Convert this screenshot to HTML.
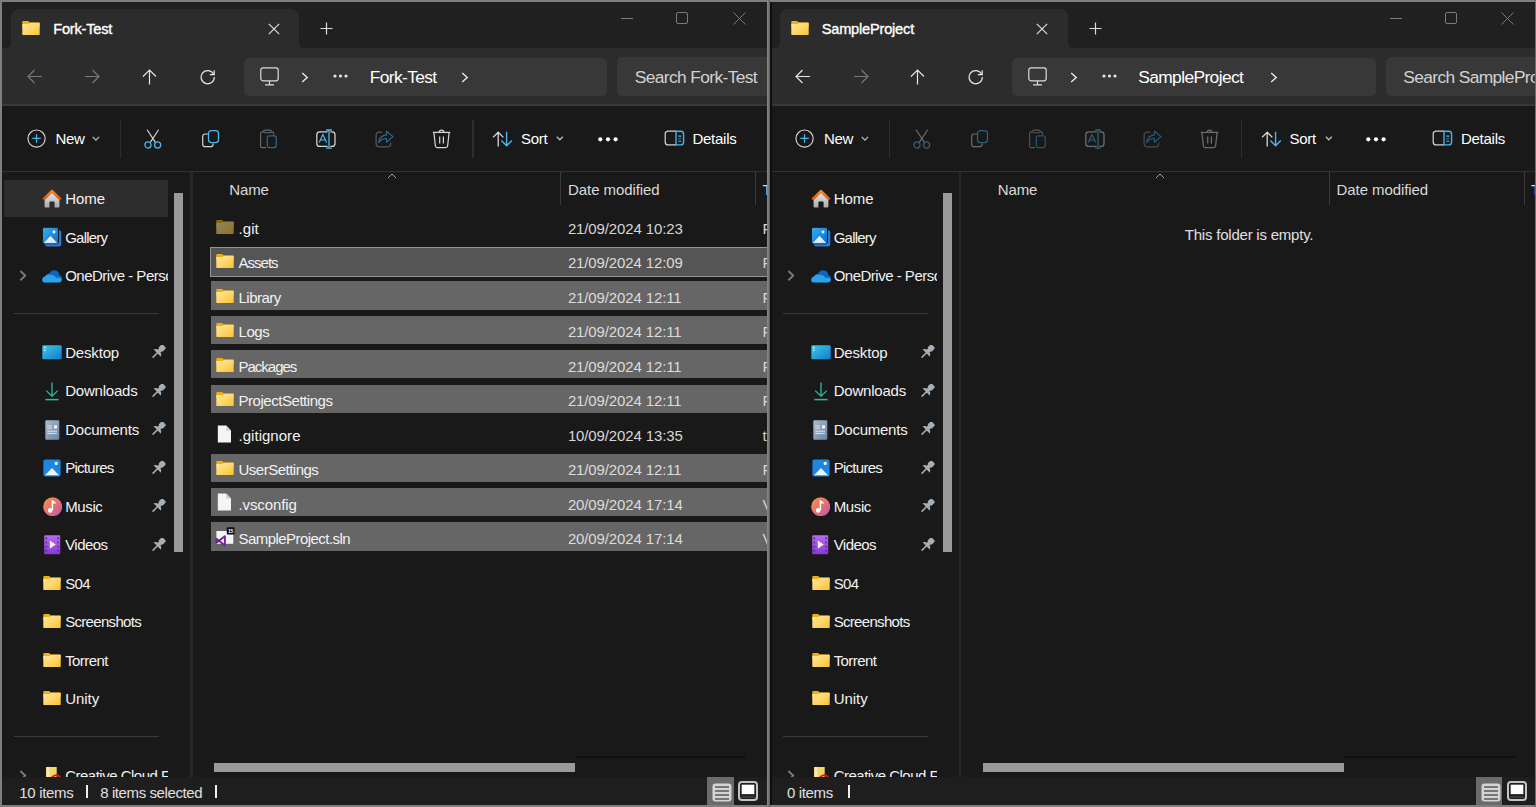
<!DOCTYPE html><html><head><meta charset="utf-8"><style>html,body{margin:0;padding:0;width:1536px;height:807px;overflow:hidden;background:#7f7f7f;font-family:"Liberation Sans",sans-serif}</style></head><body>
<svg width="0" height="0" style="position:absolute"><defs><linearGradient id="fg" x1="0" y1="0" x2="1" y2="1"><stop offset="0" stop-color="#ffe69a"/><stop offset="0.5" stop-color="#fed86c"/><stop offset="1" stop-color="#f8c232"/></linearGradient></defs></svg>
<div style="position:absolute;left:2px;top:2px;width:765px;height:803px;overflow:hidden;background:#191919">
<div style="position:absolute;left:-2px;top:-2px;width:1536px;height:807px">
<div style="position:absolute;left:0px;top:0px;width:800px;height:48px;background:#202020;"></div>
<div style="position:absolute;left:11px;top:9px;width:288.3px;height:39px;background:#2c2c2c;border-radius:8px 8px 0 0"></div>
<svg style="position:absolute;left:5px;top:42px;" width="6" height="6" viewBox="0 0 6 6"><path d="M0 6 Q6 6 6 0 L6 6 Z" fill="#2c2c2c"/></svg>
<svg style="position:absolute;left:299.3px;top:42px;" width="6" height="6" viewBox="0 0 6 6"><path d="M6 6 Q0 6 0 0 L0 6 Z" fill="#2c2c2c"/></svg>
<svg style="position:absolute;left:22.3px;top:21.4px;" width="18" height="14" viewBox="0 0 18 14"><path d="M0.3 1 Q0.3 0.1 1.2 0.1 L5.8 0.1 Q6.4 0.1 6.8 0.6 L7.6 1.5 L17.2 1.5 Q17.7 1.5 17.7 2 V6 H0.3 Z" fill="#eeb00e"/><path d="M0.3 2.9 H6.6 L7.9 1.7 H17.2 Q17.7 1.7 17.7 2.2 V13.3 Q17.7 13.9 17.1 13.9 H0.9 Q0.3 13.9 0.3 13.3 Z" fill="url(#fg)"/></svg>
<div style="position:absolute;left:53.2px;top:22.44px;font-size:14.6px;line-height:14.6px;height:14.6px;color:#ffffff;font-weight:400;white-space:nowrap;letter-spacing:-0.2px;-webkit-text-stroke:0.35px #fff">Fork-Test</div>
<svg style="position:absolute;left:267.8px;top:22.6px;" width="12" height="12" viewBox="0 0 12 12"><path d="M0.8 0.8 L11.2 11.2 M11.2 0.8 L0.8 11.2" stroke="#e6e6e6" stroke-width="1.1"/></svg>
<svg style="position:absolute;left:320.4px;top:22.4px;" width="13" height="13" viewBox="0 0 13 13"><path d="M6.5 0.5 V12.5 M0.5 6.5 H12.5" stroke="#dcdcdc" stroke-width="1.2"/></svg>
<div style="position:absolute;left:621px;top:17.5px;width:12px;height:1px;background:#7b7b7b;"></div>
<div style="position:absolute;left:676.1px;top:12px;width:12.2px;height:11.8px;background:transparent;box-sizing:border-box;border:1px solid #7b7b7b;border-radius:2px"></div>
<svg style="position:absolute;left:732.6px;top:11.8px;" width="13" height="13" viewBox="0 0 13 13"><path d="M0.5 0.5 L12.5 12.5 M12.5 0.5 L0.5 12.5" stroke="#7b7b7b" stroke-width="1"/></svg>
<div style="position:absolute;left:0px;top:48px;width:800px;height:56.5px;background:#2c2c2c;"></div>
<div style="position:absolute;left:0px;top:104.3px;width:800px;height:1.3px;background:#393939;"></div>
<svg style="position:absolute;left:26.6px;top:69.2px;" width="16" height="15" viewBox="0 0 16 15"><path d="M15 7.5 H1 M7.5 1 L1 7.5 L7.5 14" stroke="#7a7a7a" stroke-width="1.15" fill="none"/></svg>
<svg style="position:absolute;left:84.4px;top:69.2px;" width="16" height="15" viewBox="0 0 16 15"><path d="M1 7.5 H15 M8.5 1 L15 7.5 L8.5 14" stroke="#7a7a7a" stroke-width="1.15" fill="none"/></svg>
<svg style="position:absolute;left:141.6px;top:69.4px;" width="15" height="15.5" viewBox="0 0 15 15.5"><path d="M7.5 15.5 V1 M1 7.5 L7.5 1 L14 7.5" stroke="#e6e6e6" stroke-width="1.2" fill="none"/></svg>
<svg style="position:absolute;left:199.6px;top:68.8px;" width="16" height="16" viewBox="0 0 16 16"><path d="M13.6 5.2 A6.6 6.6 0 1 0 14.3 8" stroke="#e6e6e6" stroke-width="1.2" fill="none"/><path d="M14.2 1.2 V5.6 H9.8" stroke="#e6e6e6" stroke-width="1.2" fill="none"/></svg>
<div style="position:absolute;left:243.6px;top:57.6px;width:363.6px;height:38.4px;background:#383838;border-radius:5px"></div>
<svg style="position:absolute;left:259.5px;top:66.8px;" width="19" height="19" viewBox="0 0 19 19"><rect x="0.8" y="0.8" width="17.4" height="13" rx="2.2" stroke="#dcdcdc" stroke-width="1.2" fill="none"/><path d="M9.5 14 V17.6 M5 17.8 H14" stroke="#dcdcdc" stroke-width="1.2"/></svg>
<svg style="position:absolute;left:301.2px;top:72.4px;" width="8" height="11" viewBox="0 0 8 11"><path d="M1.2 1 L6.2 5.5 L1.2 10" stroke="#e6e6e6" stroke-width="1.45" fill="none"/></svg>
<svg style="position:absolute;left:333px;top:74px;" width="15" height="4" viewBox="0 0 15 4"><circle cx="2" cy="2" r="1.6" fill="#e6e6e6"/><circle cx="7.5" cy="2" r="1.6" fill="#e6e6e6"/><circle cx="13" cy="2" r="1.6" fill="#e6e6e6"/></svg>
<div style="position:absolute;left:369.7px;top:69.30px;font-size:17.4px;line-height:17.4px;height:17.4px;color:#ffffff;font-weight:400;white-space:nowrap;letter-spacing:-0.62px">Fork-Test</div>
<svg style="position:absolute;left:460.5px;top:72.4px;" width="8" height="11" viewBox="0 0 8 11"><path d="M1.2 1 L6.2 5.5 L1.2 10" stroke="#e6e6e6" stroke-width="1.45" fill="none"/></svg>
<div style="position:absolute;left:617.2px;top:57.2px;width:200px;height:38.4px;background:#383838;border-radius:5px"></div>
<div style="position:absolute;left:634.7px;top:69.35px;font-size:17.4px;line-height:17.4px;height:17.4px;color:#d2d2d2;font-weight:400;white-space:nowrap;letter-spacing:-0.63px">Search Fork-Test</div>
<div style="position:absolute;left:0px;top:105.6px;width:800px;height:65.6px;background:#191919;"></div>
<div style="position:absolute;left:0px;top:171px;width:800px;height:1.2px;background:#303030;"></div>
<svg style="position:absolute;left:26.5px;top:128.5px;" width="20" height="20" viewBox="0 0 20 20"><circle cx="9.55" cy="9.55" r="8.6" stroke="#d8d8d8" stroke-width="1.15" fill="none"/><path d="M9.55 5.2 V13.7 M5.3 9.4 H13.8" stroke="#4cb6ee" stroke-width="1.25"/></svg>
<div style="position:absolute;left:55.5px;top:131.10px;font-size:15px;line-height:15px;height:15px;color:#ffffff;font-weight:400;white-space:nowrap;letter-spacing:-0.3px">New</div>
<svg style="position:absolute;left:92.3px;top:136.2px;" width="8" height="6" viewBox="0 0 8 6"><path d="M0.7 0.9 L3.9 4.1 L7.1 0.9" stroke="#c0c0c0" stroke-width="1.2" fill="none"/></svg>
<div style="position:absolute;left:120.2px;top:119.5px;width:1.2px;height:38px;background:#2e2e2e;"></div>
<svg style="position:absolute;left:144px;top:128.5px;" width="18" height="20" viewBox="0 0 18 20"><path d="M3.1 0.7 L11.4 13.4 M14.6 0.7 L6.3 13.4" stroke="#d4d4d4" stroke-width="1.15" fill="none"/><circle cx="4" cy="16" r="3.05" stroke="#4cb6ee" stroke-width="1.3" fill="none"/><circle cx="13.6" cy="16" r="3.05" stroke="#4cb6ee" stroke-width="1.3" fill="none"/></svg>
<svg style="position:absolute;left:201px;top:129px;" width="20" height="19" viewBox="0 0 20 19"><path d="M6.9 5 H4.2 Q1.7 5 1.7 7.5 V15.2 Q1.7 17.7 4.2 17.7 H9.6 Q12.1 17.7 12.1 15.2 V14.5" stroke="#d4d4d4" stroke-width="1.2" fill="none"/><rect x="7.5" y="1.7" width="10" height="11.9" rx="2.8" stroke="#4cb6ee" stroke-width="1.3" fill="none"/></svg>
<svg style="position:absolute;left:259px;top:128.6px;" width="19" height="20" viewBox="0 0 19 20"><path d="M4 2.8 H3.4 Q1.6 2.8 1.6 4.6 V17 Q1.6 18.6 3.2 18.6 H7" stroke="#6a6a6a" stroke-width="1.15" fill="none"/><path d="M12.6 2.8 H13 Q14.6 2.8 14.6 4.6 V5.8" stroke="#6a6a6a" stroke-width="1.15" fill="none"/><path d="M4.6 2.4 Q4.6 1.1 6.1 1.1 H10.8 Q12.3 1.1 12.3 2.4 Q12.3 3.7 10.8 3.7 H6.1 Q4.6 3.7 4.6 2.4 Z" stroke="#6a6a6a" stroke-width="1.1" fill="none"/><rect x="8.3" y="6.9" width="8.9" height="11.7" rx="2" stroke="#2c6a8e" stroke-width="1.2" fill="none"/></svg>
<svg style="position:absolute;left:315px;top:128.5px;" width="22" height="20" viewBox="0 0 22 20"><path d="M12.6 2.8 H4.8 Q1.8 2.8 1.8 5.8 V14.4 Q1.8 17.4 4.8 17.4 H12.6 M15.4 2.8 H17 Q20 2.8 20 5.8 V14.4 Q20 17.4 17 17.4 H15.4" stroke="#d4d4d4" stroke-width="1.25" fill="none"/><path d="M14 1 V19.2 M11.1 1 H16.9 M11.1 19.2 H16.9" stroke="#4cb6ee" stroke-width="1.3" fill="none"/><path d="M4.2 13.6 L7.9 5.6 L11.6 13.6 M5.5 11 H10.3" stroke="#4cb6ee" stroke-width="1.2" fill="none"/></svg>
<svg style="position:absolute;left:374.5px;top:129.5px;" width="19" height="18" viewBox="0 0 19 18"><path d="M7.2 2.1 H4.5 Q1.1 2.1 1.1 5.5 V13.4 Q1.1 16.8 4.5 16.8 H12.3 Q15.7 16.8 15.7 13.4 V12.6" stroke="#5a5a5a" stroke-width="1.2" fill="none"/><path d="M3.6 12.6 Q4.6 5.6 11.5 4.8 V1.2 L18 6.6 L11.5 12.2 V8.5 Q6.6 8.4 3.6 12.6 Z" stroke="#2e6a8e" stroke-width="1.2" fill="none" stroke-linejoin="round"/></svg>
<svg style="position:absolute;left:431.5px;top:128.5px;" width="19" height="20" viewBox="0 0 19 20"><path d="M0.8 3.4 H18.2" stroke="#d4d4d4" stroke-width="1.3"/><path d="M7.2 3.2 Q7.2 1.1 9.5 1.1 Q11.8 1.1 11.8 3.2" stroke="#d4d4d4" stroke-width="1.2" fill="none"/><path d="M1.9 3.8 L3.4 17 Q3.6 18.6 5.3 18.6 H13.7 Q15.4 18.6 15.6 17 L17.1 3.8" stroke="#d4d4d4" stroke-width="1.25" fill="none"/><path d="M7.7 7.6 V14.6 M11.4 7.6 V14.6" stroke="#d4d4d4" stroke-width="1.25"/></svg>
<div style="position:absolute;left:472.4px;top:119.5px;width:1.2px;height:38px;background:#2e2e2e;"></div>
<svg style="position:absolute;left:492.3px;top:130.5px;" width="21" height="16" viewBox="0 0 21 16"><path d="M6.2 15.4 V1.2 M1 6.4 L6.2 1.2 L11.4 6.4" stroke="#d8d8d8" stroke-width="1.3" fill="none"/><path d="M14.6 0.8 V14.8 M9.4 9.6 L14.6 14.8 L19.8 9.6" stroke="#4cb6ee" stroke-width="1.4" fill="none"/></svg>
<div style="position:absolute;left:521.0px;top:131.10px;font-size:15px;line-height:15px;height:15px;color:#ffffff;font-weight:400;white-space:nowrap;letter-spacing:-0.3px">Sort</div>
<svg style="position:absolute;left:556px;top:136.4px;" width="8" height="6" viewBox="0 0 8 6"><path d="M0.8 0.8 L3.8 3.8 L6.8 0.8" stroke="#c0c0c0" stroke-width="1.25" fill="none"/></svg>
<svg style="position:absolute;left:597.5px;top:136.5px;" width="20" height="5" viewBox="0 0 20 5"><circle cx="2.3" cy="2.3" r="2.1" fill="#fff"/><circle cx="10" cy="2.3" r="2.1" fill="#fff"/><circle cx="17.6" cy="2.3" r="2.1" fill="#fff"/></svg>
<svg style="position:absolute;left:663.6px;top:130.4px;" width="21" height="16" viewBox="0 0 21 16"><path d="M12 1.2 H4.2 Q1.2 1.2 1.2 4.2 V11.9 Q1.2 14.9 4.2 14.9 H12" stroke="#d0d0d0" stroke-width="1.25" fill="none"/><path d="M12 1.2 H16.6 Q19.6 1.2 19.6 4.2 V11.9 Q19.6 14.9 16.6 14.9 H12 Z" stroke="#4cb6ee" stroke-width="1.35" fill="none"/><path d="M14.3 6.1 H17.4 M14.3 11.2 H17.4" stroke="#4cb6ee" stroke-width="1.1"/><path d="M14.3 8.7 H17.4" stroke="#3a7fa8" stroke-width="1.1"/></svg>
<div style="position:absolute;left:692.4px;top:131.10px;font-size:15px;line-height:15px;height:15px;color:#ffffff;font-weight:400;white-space:nowrap;letter-spacing:-0.25px">Details</div>
<div style="position:absolute;left:190.3px;top:172.2px;width:2.4px;height:605px;background:#272727;"></div>
<div style="position:absolute;left:4px;top:179.8px;width:164px;height:37.6px;background:#2d2d2d;"></div>
<div style="position:absolute;left:174.3px;top:193px;width:8.8px;height:358.6px;background:#9a9a9a;"></div>
<div style="position:absolute;left:14px;top:313.2px;width:145px;height:1.2px;background:#3a3a3a;"></div>
<div style="position:absolute;left:14px;top:736.2px;width:145px;height:1.2px;background:#3a3a3a;"></div>
<div style="position:absolute;left:0;top:0;width:168px;height:807px;overflow:hidden"><div style="position:absolute;left:65.2px;top:191.30px;font-size:15px;line-height:15px;height:15px;color:#f2f2f2;font-weight:400;white-space:nowrap;letter-spacing:-0.03px">Home</div></div>
<svg style="position:absolute;left:42px;top:189.2px;" width="20" height="20" viewBox="0 0 20 20"><defs><linearGradient id="hg" x1="0" y1="0" x2="0" y2="1"><stop offset="0" stop-color="#e8e8e8"/><stop offset="1" stop-color="#a9a9a9"/></linearGradient><linearGradient id="rg" x1="0" y1="0" x2="0" y2="1"><stop offset="0" stop-color="#f48a2a"/><stop offset="1" stop-color="#d85a10"/></linearGradient></defs><path d="M2.6 10.2 L10 3.4 L17.4 10.2 V17.6 Q17.4 18.6 16.4 18.6 H12.6 V13.4 Q12.6 12.6 11.8 12.6 H8.2 Q7.4 12.6 7.4 13.4 V18.6 H3.6 Q2.6 18.6 2.6 17.6 Z" fill="url(#hg)"/><path d="M1.4 10.4 L10 2.2 L18.6 10.4" stroke="url(#rg)" stroke-width="2.8" fill="none" stroke-linejoin="round"/></svg>
<div style="position:absolute;left:0;top:0;width:168px;height:807px;overflow:hidden"><div style="position:absolute;left:65.2px;top:229.80px;font-size:15px;line-height:15px;height:15px;color:#f2f2f2;font-weight:400;white-space:nowrap;letter-spacing:-0.78px">Gallery</div></div>
<svg style="position:absolute;left:42px;top:227.0px;" width="21" height="21" viewBox="0 0 21 21"><defs><linearGradient id="galg" x1="0" y1="0" x2="1" y2="1"><stop offset="0" stop-color="#36aef2"/><stop offset="1" stop-color="#0e6cc8"/></linearGradient><linearGradient id="mtg" x1="0" y1="0" x2="0" y2="1"><stop offset="0" stop-color="#ffffff"/><stop offset="1" stop-color="#c8e2f6"/></linearGradient></defs><rect x="3" y="3.2" width="16.3" height="16.3" rx="2" fill="#2a78d0"/><rect x="0.5" y="0.3" width="16" height="16.4" rx="2" fill="url(#galg)" stroke="#191919" stroke-width="1"/><path d="M1.5 16.2 L8.5 9 L15.5 16.2 Z" fill="url(#mtg)"/><circle cx="12" cy="5" r="1.4" fill="#fff"/></svg>
<div style="position:absolute;left:0;top:0;width:168px;height:807px;overflow:hidden"><div style="position:absolute;left:65.2px;top:268.30px;font-size:15px;line-height:15px;height:15px;color:#f2f2f2;font-weight:400;white-space:nowrap;letter-spacing:-0.5px">OneDrive - Personal</div></div>
<svg style="position:absolute;left:42px;top:269.6px;" width="20" height="13" viewBox="0 0 20 13"><path d="M3 8.6 Q3 3.8 7.2 3.4 Q9 0.2 12.6 0.3 Q16.6 0.6 17.4 5 Q19.9 5.6 19.9 8.6 V9.4 H3 Z" fill="#0b66c2"/><path d="M0.2 9.4 Q0.2 6.8 2.8 6.4 Q5 3.6 8.8 4.8 Q12.2 4.8 14.4 8 Q17.4 6.4 19.8 9 Q20 12.6 16.6 12.6 H3.2 Q0.2 12.6 0.2 9.4 Z" fill="#2aa3ee"/></svg>
<svg style="position:absolute;left:18.5px;top:270.4px;" width="8" height="12" viewBox="0 0 8 12"><path d="M1.4 1 L6.2 5.6 L1.4 10.2" stroke="#7c7c7c" stroke-width="1.9" fill="none"/></svg>
<div style="position:absolute;left:0;top:0;width:168px;height:807px;overflow:hidden"><div style="position:absolute;left:65.2px;top:344.80px;font-size:15px;line-height:15px;height:15px;color:#f2f2f2;font-weight:400;white-space:nowrap;letter-spacing:-0.17px">Desktop</div></div>
<svg style="position:absolute;left:42px;top:345.0px;" width="20" height="15" viewBox="0 0 20 15"><defs><linearGradient id="dg" x1="0" y1="0" x2="1" y2="1"><stop offset="0" stop-color="#3ccbe8"/><stop offset="1" stop-color="#1578cc"/></linearGradient></defs><rect x="0.3" y="0.3" width="19.4" height="14" rx="1.4" fill="url(#dg)"/><rect x="2" y="2" width="1.6" height="1.2" fill="#e8f6fb"/><rect x="2" y="4.6" width="1.6" height="1.2" fill="#e8f6fb"/></svg>
<svg style="position:absolute;left:151px;top:345.3px;" width="15" height="15" viewBox="0 0 15 15"><g transform="translate(7.3 6.9) rotate(45) translate(0 -8.4)" fill="#a5afb7"><rect x="-2.9" y="0" width="5.8" height="5.6" rx="1.5"/><rect x="-2" y="5" width="4" height="3"/><path d="M-5.2 10 L5.2 10 L3.2 7.4 L-3.2 7.4 Z"/><path d="M0 9.6 V15.8" stroke="#a5afb7" stroke-width="1.5" stroke-linecap="round"/></g></svg>
<div style="position:absolute;left:0;top:0;width:168px;height:807px;overflow:hidden"><div style="position:absolute;left:65.2px;top:383.30px;font-size:15px;line-height:15px;height:15px;color:#f2f2f2;font-weight:400;white-space:nowrap;letter-spacing:-0.22px">Downloads</div></div>
<svg style="position:absolute;left:45px;top:382px;" width="14" height="19" viewBox="0 0 14 19"><path d="M7 0.6 V14.2 M1.2 8.6 L7 14.2 L12.8 8.6" stroke="#2cbe9a" stroke-width="1.3" fill="none"/><path d="M0.4 17.6 H13.6" stroke="#2cbe9a" stroke-width="1.5"/></svg>
<svg style="position:absolute;left:151px;top:383.8px;" width="15" height="15" viewBox="0 0 15 15"><g transform="translate(7.3 6.9) rotate(45) translate(0 -8.4)" fill="#a5afb7"><rect x="-2.9" y="0" width="5.8" height="5.6" rx="1.5"/><rect x="-2" y="5" width="4" height="3"/><path d="M-5.2 10 L5.2 10 L3.2 7.4 L-3.2 7.4 Z"/><path d="M0 9.6 V15.8" stroke="#a5afb7" stroke-width="1.5" stroke-linecap="round"/></g></svg>
<div style="position:absolute;left:0;top:0;width:168px;height:807px;overflow:hidden"><div style="position:absolute;left:65.2px;top:421.80px;font-size:15px;line-height:15px;height:15px;color:#f2f2f2;font-weight:400;white-space:nowrap;letter-spacing:-0.24px">Documents</div></div>
<svg style="position:absolute;left:44.8px;top:419.5px;" width="15" height="20" viewBox="0 0 15 20"><defs><linearGradient id="docg" x1="0" y1="0" x2="1" y2="1"><stop offset="0" stop-color="#aabdd0"/><stop offset="1" stop-color="#6a85a4"/></linearGradient></defs><rect x="0.3" y="0.3" width="14" height="19.4" rx="1.2" fill="url(#docg)"/><path d="M2.4 6 H6.8 M2.4 8.2 H6.8 M2.4 11.2 H12 M2.4 13.4 H12" stroke="#e6edf4" stroke-width="0.9"/><rect x="9" y="5.4" width="3" height="3" fill="#f4f7fa"/></svg>
<svg style="position:absolute;left:151px;top:422.3px;" width="15" height="15" viewBox="0 0 15 15"><g transform="translate(7.3 6.9) rotate(45) translate(0 -8.4)" fill="#a5afb7"><rect x="-2.9" y="0" width="5.8" height="5.6" rx="1.5"/><rect x="-2" y="5" width="4" height="3"/><path d="M-5.2 10 L5.2 10 L3.2 7.4 L-3.2 7.4 Z"/><path d="M0 9.6 V15.8" stroke="#a5afb7" stroke-width="1.5" stroke-linecap="round"/></g></svg>
<div style="position:absolute;left:0;top:0;width:168px;height:807px;overflow:hidden"><div style="position:absolute;left:65.2px;top:460.30px;font-size:15px;line-height:15px;height:15px;color:#f2f2f2;font-weight:400;white-space:nowrap;letter-spacing:-0.73px">Pictures</div></div>
<svg style="position:absolute;left:43px;top:458.5px;" width="18" height="18" viewBox="0 0 18 18"><rect x="0.4" y="0.4" width="17.2" height="17.2" rx="2" fill="#1c86e0"/><path d="M2 16.2 L9 9 L16 16.2 Z" fill="#eaf4fc"/><circle cx="13.2" cy="4.4" r="1.6" fill="#fff"/></svg>
<svg style="position:absolute;left:151px;top:460.8px;" width="15" height="15" viewBox="0 0 15 15"><g transform="translate(7.3 6.9) rotate(45) translate(0 -8.4)" fill="#a5afb7"><rect x="-2.9" y="0" width="5.8" height="5.6" rx="1.5"/><rect x="-2" y="5" width="4" height="3"/><path d="M-5.2 10 L5.2 10 L3.2 7.4 L-3.2 7.4 Z"/><path d="M0 9.6 V15.8" stroke="#a5afb7" stroke-width="1.5" stroke-linecap="round"/></g></svg>
<div style="position:absolute;left:0;top:0;width:168px;height:807px;overflow:hidden"><div style="position:absolute;left:65.2px;top:498.80px;font-size:15px;line-height:15px;height:15px;color:#f2f2f2;font-weight:400;white-space:nowrap;letter-spacing:-0.38px">Music</div></div>
<svg style="position:absolute;left:42.6px;top:496.8px;" width="19.4" height="19.4" viewBox="0 0 19.4 19.4"><defs><linearGradient id="mg" x1="0" y1="0" x2="1" y2="1"><stop offset="0" stop-color="#f39a48"/><stop offset="0.6" stop-color="#e06a7c"/><stop offset="1" stop-color="#b458c0"/></linearGradient></defs><circle cx="9.7" cy="9.7" r="9.5" fill="url(#mg)"/><path d="M9.4 3.4 V13.2" stroke="#fff" stroke-width="1.4"/><path d="M9.4 3.4 Q12.2 4.4 13.4 6.6 L9.6 6.4 Z" fill="#fff"/><circle cx="7.2" cy="13.4" r="2.3" fill="#fff"/></svg>
<svg style="position:absolute;left:151px;top:499.3px;" width="15" height="15" viewBox="0 0 15 15"><g transform="translate(7.3 6.9) rotate(45) translate(0 -8.4)" fill="#a5afb7"><rect x="-2.9" y="0" width="5.8" height="5.6" rx="1.5"/><rect x="-2" y="5" width="4" height="3"/><path d="M-5.2 10 L5.2 10 L3.2 7.4 L-3.2 7.4 Z"/><path d="M0 9.6 V15.8" stroke="#a5afb7" stroke-width="1.5" stroke-linecap="round"/></g></svg>
<div style="position:absolute;left:0;top:0;width:168px;height:807px;overflow:hidden"><div style="position:absolute;left:65.2px;top:537.30px;font-size:15px;line-height:15px;height:15px;color:#f2f2f2;font-weight:400;white-space:nowrap;letter-spacing:-0.56px">Videos</div></div>
<svg style="position:absolute;left:43.8px;top:534.6px;" width="17" height="20" viewBox="0 0 17 20"><defs><linearGradient id="vg" x1="0" y1="0" x2="0" y2="1"><stop offset="0" stop-color="#b86af0"/><stop offset="1" stop-color="#8838d6"/></linearGradient></defs><rect x="0.2" y="0.2" width="16" height="19" rx="1.3" fill="url(#vg)"/><g fill="#5a2698"><circle cx="2.3" cy="3.2" r="0.95"/><circle cx="2.3" cy="7.4" r="0.95"/><circle cx="2.3" cy="11.6" r="0.95"/><circle cx="2.3" cy="15.8" r="0.95"/><circle cx="14.1" cy="3.2" r="0.95"/><circle cx="14.1" cy="7.4" r="0.95"/><circle cx="14.1" cy="11.6" r="0.95"/><circle cx="14.1" cy="15.8" r="0.95"/></g><path d="M5.8 5.4 L11.8 9.6 L5.8 13.8 Z" fill="#eeeeee"/></svg>
<svg style="position:absolute;left:151px;top:537.8px;" width="15" height="15" viewBox="0 0 15 15"><g transform="translate(7.3 6.9) rotate(45) translate(0 -8.4)" fill="#a5afb7"><rect x="-2.9" y="0" width="5.8" height="5.6" rx="1.5"/><rect x="-2" y="5" width="4" height="3"/><path d="M-5.2 10 L5.2 10 L3.2 7.4 L-3.2 7.4 Z"/><path d="M0 9.6 V15.8" stroke="#a5afb7" stroke-width="1.5" stroke-linecap="round"/></g></svg>
<div style="position:absolute;left:0;top:0;width:168px;height:807px;overflow:hidden"><div style="position:absolute;left:65.2px;top:575.80px;font-size:15px;line-height:15px;height:15px;color:#f2f2f2;font-weight:400;white-space:nowrap;letter-spacing:-0.7px">S04</div></div>
<svg style="position:absolute;left:43px;top:575.5px;" width="18" height="14" viewBox="0 0 18 14"><path d="M0.3 1 Q0.3 0.1 1.2 0.1 L5.8 0.1 Q6.4 0.1 6.8 0.6 L7.6 1.5 L17.2 1.5 Q17.7 1.5 17.7 2 V6 H0.3 Z" fill="#eeb00e"/><path d="M0.3 2.9 H6.6 L7.9 1.7 H17.2 Q17.7 1.7 17.7 2.2 V13.3 Q17.7 13.9 17.1 13.9 H0.9 Q0.3 13.9 0.3 13.3 Z" fill="url(#fg)"/></svg>
<div style="position:absolute;left:0;top:0;width:168px;height:807px;overflow:hidden"><div style="position:absolute;left:65.2px;top:614.30px;font-size:15px;line-height:15px;height:15px;color:#f2f2f2;font-weight:400;white-space:nowrap;letter-spacing:-0.69px">Screenshots</div></div>
<svg style="position:absolute;left:43px;top:614px;" width="18" height="14" viewBox="0 0 18 14"><path d="M0.3 1 Q0.3 0.1 1.2 0.1 L5.8 0.1 Q6.4 0.1 6.8 0.6 L7.6 1.5 L17.2 1.5 Q17.7 1.5 17.7 2 V6 H0.3 Z" fill="#eeb00e"/><path d="M0.3 2.9 H6.6 L7.9 1.7 H17.2 Q17.7 1.7 17.7 2.2 V13.3 Q17.7 13.9 17.1 13.9 H0.9 Q0.3 13.9 0.3 13.3 Z" fill="url(#fg)"/></svg>
<div style="position:absolute;left:0;top:0;width:168px;height:807px;overflow:hidden"><div style="position:absolute;left:65.2px;top:652.80px;font-size:15px;line-height:15px;height:15px;color:#f2f2f2;font-weight:400;white-space:nowrap;letter-spacing:-0.58px">Torrent</div></div>
<svg style="position:absolute;left:43px;top:652.5px;" width="18" height="14" viewBox="0 0 18 14"><path d="M0.3 1 Q0.3 0.1 1.2 0.1 L5.8 0.1 Q6.4 0.1 6.8 0.6 L7.6 1.5 L17.2 1.5 Q17.7 1.5 17.7 2 V6 H0.3 Z" fill="#eeb00e"/><path d="M0.3 2.9 H6.6 L7.9 1.7 H17.2 Q17.7 1.7 17.7 2.2 V13.3 Q17.7 13.9 17.1 13.9 H0.9 Q0.3 13.9 0.3 13.3 Z" fill="url(#fg)"/></svg>
<div style="position:absolute;left:0;top:0;width:168px;height:807px;overflow:hidden"><div style="position:absolute;left:65.2px;top:691.30px;font-size:15px;line-height:15px;height:15px;color:#f2f2f2;font-weight:400;white-space:nowrap;letter-spacing:-0.05px">Unity</div></div>
<svg style="position:absolute;left:43px;top:691px;" width="18" height="14" viewBox="0 0 18 14"><path d="M0.3 1 Q0.3 0.1 1.2 0.1 L5.8 0.1 Q6.4 0.1 6.8 0.6 L7.6 1.5 L17.2 1.5 Q17.7 1.5 17.7 2 V6 H0.3 Z" fill="#eeb00e"/><path d="M0.3 2.9 H6.6 L7.9 1.7 H17.2 Q17.7 1.7 17.7 2.2 V13.3 Q17.7 13.9 17.1 13.9 H0.9 Q0.3 13.9 0.3 13.3 Z" fill="url(#fg)"/></svg>
<div style="position:absolute;left:0;top:0;width:168px;height:807px;overflow:hidden"><div style="position:absolute;left:65.2px;top:767.80px;font-size:15px;line-height:15px;height:15px;color:#f2f2f2;font-weight:400;white-space:nowrap;letter-spacing:-0.5px">Creative Cloud Files</div></div>
<svg style="position:absolute;left:45.5px;top:767.0px;" width="20" height="17" viewBox="0 0 20 17"><rect x="0.2" y="0" width="10.5" height="15" fill="#f3d46a"/><rect x="0.2" y="0" width="3.6" height="15" fill="#fbe6a8"/><path d="M5.8 10.6 Q8.6 7.2 12 8.6 Q14.6 9.6 15.4 11.4" stroke="#d21c1c" stroke-width="1.7" fill="none"/><path d="M8 11.4 Q10.4 9.6 12.6 11.2" stroke="#d21c1c" stroke-width="1.3" fill="none"/></svg>
<svg style="position:absolute;left:18.5px;top:769.9px;" width="8" height="12" viewBox="0 0 8 12"><path d="M1.4 1 L6.2 5.6 L1.4 10.2" stroke="#7c7c7c" stroke-width="1.9" fill="none"/></svg>
<div style="position:absolute;left:229.2px;top:181.90px;font-size:15px;line-height:15px;height:15px;color:#dadada;font-weight:400;white-space:nowrap;letter-spacing:-0.09px">Name</div>
<svg style="position:absolute;left:386.8px;top:173.2px;" width="10" height="6" viewBox="0 0 10 6"><path d="M0.8 5.2 L5 1 L9.2 5.2" stroke="#a0a0a0" stroke-width="1" fill="none"/></svg>
<div style="position:absolute;left:560px;top:172.2px;width:1.2px;height:32.5px;background:#3a3a3a;"></div>
<div style="position:absolute;left:568.1px;top:181.90px;font-size:15px;line-height:15px;height:15px;color:#dadada;font-weight:400;white-space:nowrap;letter-spacing:-0.09px">Date modified</div>
<div style="position:absolute;left:755.1px;top:172.2px;width:1.2px;height:32.5px;background:#3a3a3a;"></div>
<div style="position:absolute;left:762.4px;top:181.90px;font-size:15px;line-height:15px;height:15px;color:#dadada;font-weight:400;white-space:nowrap;letter-spacing:-0.09px">Type</div>
<div style="position:absolute;left:238.5px;top:221.00px;font-size:15px;line-height:15px;height:15px;color:#f2f2f2;font-weight:400;white-space:nowrap;letter-spacing:0.07px">.git</div>
<div style="position:absolute;left:567.9px;top:221.00px;font-size:15px;line-height:15px;height:15px;color:#d6d6d6;font-weight:400;white-space:nowrap;letter-spacing:-0.13px">21/09/2024 10:23</div>
<div style="position:absolute;left:762.4px;top:221.00px;font-size:15px;line-height:15px;height:15px;color:#d6d6d6;font-weight:400;white-space:nowrap;letter-spacing:-0.13px">File folder</div>
<svg style="opacity:0.52;position:absolute;left:216px;top:219.9px;" width="18" height="14" viewBox="0 0 18 14"><path d="M0.3 1 Q0.3 0.1 1.2 0.1 L5.8 0.1 Q6.4 0.1 6.8 0.6 L7.6 1.5 L17.2 1.5 Q17.7 1.5 17.7 2 V6 H0.3 Z" fill="#eeb00e"/><path d="M0.3 2.9 H6.6 L7.9 1.7 H17.2 Q17.7 1.7 17.7 2.2 V13.3 Q17.7 13.9 17.1 13.9 H0.9 Q0.3 13.9 0.3 13.3 Z" fill="url(#fg)"/></svg>
<div style="position:absolute;left:210.2px;top:247.14px;width:600px;height:29.4px;background:#555555;box-sizing:border-box;border:1.6px solid #959595"></div>
<div style="position:absolute;left:238.5px;top:255.44px;font-size:15px;line-height:15px;height:15px;color:#f2f2f2;font-weight:400;white-space:nowrap;letter-spacing:-0.98px">Assets</div>
<div style="position:absolute;left:567.9px;top:255.44px;font-size:15px;line-height:15px;height:15px;color:#dcdcdc;font-weight:400;white-space:nowrap;letter-spacing:-0.13px">21/09/2024 12:09</div>
<div style="position:absolute;left:762.4px;top:255.44px;font-size:15px;line-height:15px;height:15px;color:#d6d6d6;font-weight:400;white-space:nowrap;letter-spacing:-0.13px">File folder</div>
<svg style="position:absolute;left:216px;top:254.33999999999997px;" width="18" height="14" viewBox="0 0 18 14"><path d="M0.3 1 Q0.3 0.1 1.2 0.1 L5.8 0.1 Q6.4 0.1 6.8 0.6 L7.6 1.5 L17.2 1.5 Q17.7 1.5 17.7 2 V6 H0.3 Z" fill="#eeb00e"/><path d="M0.3 2.9 H6.6 L7.9 1.7 H17.2 Q17.7 1.7 17.7 2.2 V13.3 Q17.7 13.9 17.1 13.9 H0.9 Q0.3 13.9 0.3 13.3 Z" fill="url(#fg)"/></svg>
<div style="position:absolute;left:210.6px;top:281.38px;width:600px;height:28.2px;background:#666666;"></div>
<div style="position:absolute;left:238.5px;top:289.88px;font-size:15px;line-height:15px;height:15px;color:#f2f2f2;font-weight:400;white-space:nowrap;letter-spacing:-0.52px">Library</div>
<div style="position:absolute;left:567.9px;top:289.88px;font-size:15px;line-height:15px;height:15px;color:#dcdcdc;font-weight:400;white-space:nowrap;letter-spacing:-0.13px">21/09/2024 12:11</div>
<div style="position:absolute;left:762.4px;top:289.88px;font-size:15px;line-height:15px;height:15px;color:#d6d6d6;font-weight:400;white-space:nowrap;letter-spacing:-0.13px">File folder</div>
<svg style="position:absolute;left:216px;top:288.78px;" width="18" height="14" viewBox="0 0 18 14"><path d="M0.3 1 Q0.3 0.1 1.2 0.1 L5.8 0.1 Q6.4 0.1 6.8 0.6 L7.6 1.5 L17.2 1.5 Q17.7 1.5 17.7 2 V6 H0.3 Z" fill="#eeb00e"/><path d="M0.3 2.9 H6.6 L7.9 1.7 H17.2 Q17.7 1.7 17.7 2.2 V13.3 Q17.7 13.9 17.1 13.9 H0.9 Q0.3 13.9 0.3 13.3 Z" fill="url(#fg)"/></svg>
<div style="position:absolute;left:210.6px;top:315.82px;width:600px;height:28.2px;background:#666666;"></div>
<div style="position:absolute;left:238.5px;top:324.32px;font-size:15px;line-height:15px;height:15px;color:#f2f2f2;font-weight:400;white-space:nowrap;letter-spacing:-0.43px">Logs</div>
<div style="position:absolute;left:567.9px;top:324.32px;font-size:15px;line-height:15px;height:15px;color:#dcdcdc;font-weight:400;white-space:nowrap;letter-spacing:-0.13px">21/09/2024 12:11</div>
<div style="position:absolute;left:762.4px;top:324.32px;font-size:15px;line-height:15px;height:15px;color:#d6d6d6;font-weight:400;white-space:nowrap;letter-spacing:-0.13px">File folder</div>
<svg style="position:absolute;left:216px;top:323.21999999999997px;" width="18" height="14" viewBox="0 0 18 14"><path d="M0.3 1 Q0.3 0.1 1.2 0.1 L5.8 0.1 Q6.4 0.1 6.8 0.6 L7.6 1.5 L17.2 1.5 Q17.7 1.5 17.7 2 V6 H0.3 Z" fill="#eeb00e"/><path d="M0.3 2.9 H6.6 L7.9 1.7 H17.2 Q17.7 1.7 17.7 2.2 V13.3 Q17.7 13.9 17.1 13.9 H0.9 Q0.3 13.9 0.3 13.3 Z" fill="url(#fg)"/></svg>
<div style="position:absolute;left:210.6px;top:350.26px;width:600px;height:28.2px;background:#666666;"></div>
<div style="position:absolute;left:238.5px;top:358.76px;font-size:15px;line-height:15px;height:15px;color:#f2f2f2;font-weight:400;white-space:nowrap;letter-spacing:-1.01px">Packages</div>
<div style="position:absolute;left:567.9px;top:358.76px;font-size:15px;line-height:15px;height:15px;color:#dcdcdc;font-weight:400;white-space:nowrap;letter-spacing:-0.13px">21/09/2024 12:11</div>
<div style="position:absolute;left:762.4px;top:358.76px;font-size:15px;line-height:15px;height:15px;color:#d6d6d6;font-weight:400;white-space:nowrap;letter-spacing:-0.13px">File folder</div>
<svg style="position:absolute;left:216px;top:357.65999999999997px;" width="18" height="14" viewBox="0 0 18 14"><path d="M0.3 1 Q0.3 0.1 1.2 0.1 L5.8 0.1 Q6.4 0.1 6.8 0.6 L7.6 1.5 L17.2 1.5 Q17.7 1.5 17.7 2 V6 H0.3 Z" fill="#eeb00e"/><path d="M0.3 2.9 H6.6 L7.9 1.7 H17.2 Q17.7 1.7 17.7 2.2 V13.3 Q17.7 13.9 17.1 13.9 H0.9 Q0.3 13.9 0.3 13.3 Z" fill="url(#fg)"/></svg>
<div style="position:absolute;left:210.6px;top:384.7px;width:600px;height:28.2px;background:#666666;"></div>
<div style="position:absolute;left:238.5px;top:393.20px;font-size:15px;line-height:15px;height:15px;color:#f2f2f2;font-weight:400;white-space:nowrap;letter-spacing:-0.46px">ProjectSettings</div>
<div style="position:absolute;left:567.9px;top:393.20px;font-size:15px;line-height:15px;height:15px;color:#dcdcdc;font-weight:400;white-space:nowrap;letter-spacing:-0.13px">21/09/2024 12:11</div>
<div style="position:absolute;left:762.4px;top:393.20px;font-size:15px;line-height:15px;height:15px;color:#d6d6d6;font-weight:400;white-space:nowrap;letter-spacing:-0.13px">File folder</div>
<svg style="position:absolute;left:216px;top:392.09999999999997px;" width="18" height="14" viewBox="0 0 18 14"><path d="M0.3 1 Q0.3 0.1 1.2 0.1 L5.8 0.1 Q6.4 0.1 6.8 0.6 L7.6 1.5 L17.2 1.5 Q17.7 1.5 17.7 2 V6 H0.3 Z" fill="#eeb00e"/><path d="M0.3 2.9 H6.6 L7.9 1.7 H17.2 Q17.7 1.7 17.7 2.2 V13.3 Q17.7 13.9 17.1 13.9 H0.9 Q0.3 13.9 0.3 13.3 Z" fill="url(#fg)"/></svg>
<div style="position:absolute;left:238.5px;top:427.64px;font-size:15px;line-height:15px;height:15px;color:#f2f2f2;font-weight:400;white-space:nowrap;letter-spacing:0.03px">.gitignore</div>
<div style="position:absolute;left:567.9px;top:427.64px;font-size:15px;line-height:15px;height:15px;color:#d6d6d6;font-weight:400;white-space:nowrap;letter-spacing:-0.13px">10/09/2024 13:35</div>
<div style="position:absolute;left:762.4px;top:427.64px;font-size:15px;line-height:15px;height:15px;color:#d6d6d6;font-weight:400;white-space:nowrap;letter-spacing:-0.13px">txtfile</div>
<svg style="position:absolute;left:217.4px;top:424.53999999999996px;" width="15" height="18" viewBox="0 0 15 18"><path d="M0.8 0.6 H9.2 L14 5.4 V17.4 H0.8 Z" fill="#f4f4f4"/><path d="M9.2 0.6 V5.4 H14" fill="#cfcfcf"/></svg>
<div style="position:absolute;left:210.6px;top:453.58px;width:600px;height:28.2px;background:#666666;"></div>
<div style="position:absolute;left:238.5px;top:462.08px;font-size:15px;line-height:15px;height:15px;color:#f2f2f2;font-weight:400;white-space:nowrap;letter-spacing:-0.5px">UserSettings</div>
<div style="position:absolute;left:567.9px;top:462.08px;font-size:15px;line-height:15px;height:15px;color:#dcdcdc;font-weight:400;white-space:nowrap;letter-spacing:-0.13px">21/09/2024 12:11</div>
<div style="position:absolute;left:762.4px;top:462.08px;font-size:15px;line-height:15px;height:15px;color:#d6d6d6;font-weight:400;white-space:nowrap;letter-spacing:-0.13px">File folder</div>
<svg style="position:absolute;left:216px;top:460.97999999999996px;" width="18" height="14" viewBox="0 0 18 14"><path d="M0.3 1 Q0.3 0.1 1.2 0.1 L5.8 0.1 Q6.4 0.1 6.8 0.6 L7.6 1.5 L17.2 1.5 Q17.7 1.5 17.7 2 V6 H0.3 Z" fill="#eeb00e"/><path d="M0.3 2.9 H6.6 L7.9 1.7 H17.2 Q17.7 1.7 17.7 2.2 V13.3 Q17.7 13.9 17.1 13.9 H0.9 Q0.3 13.9 0.3 13.3 Z" fill="url(#fg)"/></svg>
<div style="position:absolute;left:210.6px;top:488.02px;width:600px;height:28.2px;background:#666666;"></div>
<div style="position:absolute;left:238.5px;top:496.52px;font-size:15px;line-height:15px;height:15px;color:#f2f2f2;font-weight:400;white-space:nowrap;letter-spacing:-0.12px">.vsconfig</div>
<div style="position:absolute;left:567.9px;top:496.52px;font-size:15px;line-height:15px;height:15px;color:#dcdcdc;font-weight:400;white-space:nowrap;letter-spacing:-0.13px">20/09/2024 17:14</div>
<div style="position:absolute;left:762.4px;top:496.52px;font-size:15px;line-height:15px;height:15px;color:#d6d6d6;font-weight:400;white-space:nowrap;letter-spacing:-0.13px">VSCONFIG File</div>
<svg style="position:absolute;left:217.4px;top:493.41999999999996px;" width="15" height="18" viewBox="0 0 15 18"><path d="M0.8 0.6 H9.2 L14 5.4 V17.4 H0.8 Z" fill="#f4f4f4"/><path d="M9.2 0.6 V5.4 H14" fill="#cfcfcf"/></svg>
<div style="position:absolute;left:210.6px;top:522.46px;width:600px;height:28.2px;background:#666666;"></div>
<div style="position:absolute;left:238.5px;top:530.96px;font-size:15px;line-height:15px;height:15px;color:#f2f2f2;font-weight:400;white-space:nowrap;letter-spacing:-0.55px">SampleProject.sln</div>
<div style="position:absolute;left:567.9px;top:530.96px;font-size:15px;line-height:15px;height:15px;color:#dcdcdc;font-weight:400;white-space:nowrap;letter-spacing:-0.13px">20/09/2024 17:14</div>
<div style="position:absolute;left:762.4px;top:530.96px;font-size:15px;line-height:15px;height:15px;color:#d6d6d6;font-weight:400;white-space:nowrap;letter-spacing:-0.13px">Visual Studio</div>
<svg style="position:absolute;left:214px;top:526.36px;" width="22" height="22" viewBox="0 0 22 22"><rect x="2.4" y="5" width="16.9" height="12.8" fill="#f4f4f4"/><rect x="12.8" y="1.2" width="7.7" height="7.4" rx="1" fill="#0a0a0a"/><text x="16.6" y="6.9" font-size="5" fill="#fff" text-anchor="middle" font-family="Liberation Sans" font-weight="700" letter-spacing="-0.3">15</text><path d="M10.9 10.2 V19.6 L2.4 12.8 V16.8 Z" fill="none" stroke="#74239a" stroke-width="1.9" stroke-linejoin="round"/></svg>
<div style="position:absolute;left:214.4px;top:763px;width:361px;height:8.8px;background:#9a9a9a;"></div>
<div style="position:absolute;left:575.5px;top:756.4px;width:170.5px;height:1.2px;background:#101010;"></div>
<div style="position:absolute;left:0px;top:776.8px;width:800px;height:40px;background:#1e1e1e;"></div>
<div style="position:absolute;left:19.3px;top:784.80px;font-size:15px;line-height:15px;height:15px;color:#e0e0e0;font-weight:400;white-space:nowrap;letter-spacing:-0.33px">10 items</div>
<div style="position:absolute;left:86px;top:784.8px;width:2.2px;height:13.2px;background:#f0f0f0;"></div>
<div style="position:absolute;left:100.2px;top:784.80px;font-size:15px;line-height:15px;height:15px;color:#e0e0e0;font-weight:400;white-space:nowrap;letter-spacing:-0.4px">8 items selected</div>
<div style="position:absolute;left:214.8px;top:784.8px;width:2.2px;height:13.2px;background:#f0f0f0;"></div>
<div style="position:absolute;left:707.4px;top:777px;width:26.5px;height:28px;background:#6b6b6b;"></div>
<svg style="position:absolute;left:712px;top:782.8px;" width="20" height="19" viewBox="0 0 20 19"><rect x="0.5" y="0.5" width="19" height="18" rx="3" fill="#d4d4d4"/><path d="M3 4 H17 M3 8 H17 M3 12 H17 M3 16 H17" stroke="#1a1a1a" stroke-width="1.1"/></svg>
<svg style="position:absolute;left:738px;top:781px;" width="20" height="20" viewBox="0 0 20 20"><rect x="1" y="1" width="18" height="18" rx="3" stroke="#c4c4c4" stroke-width="2" fill="none"/><rect x="3.2" y="3.2" width="13.6" height="10.4" fill="#ffffff" stroke="#222" stroke-width="0.8"/><path d="M3.2 16 H16.8" stroke="#555" stroke-width="1"/></svg>
</div></div>
<div style="position:absolute;left:770px;top:2px;width:765px;height:803px;overflow:hidden;background:#191919">
<div style="position:absolute;left:-1.5px;top:-2px;width:1536px;height:807px">
<div style="position:absolute;left:0px;top:0px;width:800px;height:48px;background:#202020;"></div>
<div style="position:absolute;left:11px;top:9px;width:288.3px;height:39px;background:#2c2c2c;border-radius:8px 8px 0 0"></div>
<svg style="position:absolute;left:5px;top:42px;" width="6" height="6" viewBox="0 0 6 6"><path d="M0 6 Q6 6 6 0 L6 6 Z" fill="#2c2c2c"/></svg>
<svg style="position:absolute;left:299.3px;top:42px;" width="6" height="6" viewBox="0 0 6 6"><path d="M6 6 Q0 6 0 0 L0 6 Z" fill="#2c2c2c"/></svg>
<svg style="position:absolute;left:22.3px;top:21.4px;" width="18" height="14" viewBox="0 0 18 14"><path d="M0.3 1 Q0.3 0.1 1.2 0.1 L5.8 0.1 Q6.4 0.1 6.8 0.6 L7.6 1.5 L17.2 1.5 Q17.7 1.5 17.7 2 V6 H0.3 Z" fill="#eeb00e"/><path d="M0.3 2.9 H6.6 L7.9 1.7 H17.2 Q17.7 1.7 17.7 2.2 V13.3 Q17.7 13.9 17.1 13.9 H0.9 Q0.3 13.9 0.3 13.3 Z" fill="url(#fg)"/></svg>
<div style="position:absolute;left:53.2px;top:22.44px;font-size:14.6px;line-height:14.6px;height:14.6px;color:#ffffff;font-weight:400;white-space:nowrap;letter-spacing:-0.2px;-webkit-text-stroke:0.35px #fff">SampleProject</div>
<svg style="position:absolute;left:267.8px;top:22.6px;" width="12" height="12" viewBox="0 0 12 12"><path d="M0.8 0.8 L11.2 11.2 M11.2 0.8 L0.8 11.2" stroke="#e6e6e6" stroke-width="1.1"/></svg>
<svg style="position:absolute;left:320.4px;top:22.4px;" width="13" height="13" viewBox="0 0 13 13"><path d="M6.5 0.5 V12.5 M0.5 6.5 H12.5" stroke="#dcdcdc" stroke-width="1.2"/></svg>
<div style="position:absolute;left:621px;top:17.5px;width:12px;height:1px;background:#7b7b7b;"></div>
<div style="position:absolute;left:676.1px;top:12px;width:12.2px;height:11.8px;background:transparent;box-sizing:border-box;border:1px solid #7b7b7b;border-radius:2px"></div>
<svg style="position:absolute;left:732.6px;top:11.8px;" width="13" height="13" viewBox="0 0 13 13"><path d="M0.5 0.5 L12.5 12.5 M12.5 0.5 L0.5 12.5" stroke="#7b7b7b" stroke-width="1"/></svg>
<div style="position:absolute;left:0px;top:48px;width:800px;height:56.5px;background:#2c2c2c;"></div>
<div style="position:absolute;left:0px;top:104.3px;width:800px;height:1.3px;background:#393939;"></div>
<svg style="position:absolute;left:26.6px;top:69.2px;" width="16" height="15" viewBox="0 0 16 15"><path d="M15 7.5 H1 M7.5 1 L1 7.5 L7.5 14" stroke="#e6e6e6" stroke-width="1.15" fill="none"/></svg>
<svg style="position:absolute;left:84.4px;top:69.2px;" width="16" height="15" viewBox="0 0 16 15"><path d="M1 7.5 H15 M8.5 1 L15 7.5 L8.5 14" stroke="#7a7a7a" stroke-width="1.15" fill="none"/></svg>
<svg style="position:absolute;left:141.6px;top:69.4px;" width="15" height="15.5" viewBox="0 0 15 15.5"><path d="M7.5 15.5 V1 M1 7.5 L7.5 1 L14 7.5" stroke="#e6e6e6" stroke-width="1.2" fill="none"/></svg>
<svg style="position:absolute;left:199.6px;top:68.8px;" width="16" height="16" viewBox="0 0 16 16"><path d="M13.6 5.2 A6.6 6.6 0 1 0 14.3 8" stroke="#e6e6e6" stroke-width="1.2" fill="none"/><path d="M14.2 1.2 V5.6 H9.8" stroke="#e6e6e6" stroke-width="1.2" fill="none"/></svg>
<div style="position:absolute;left:243.6px;top:57.6px;width:363.6px;height:38.4px;background:#383838;border-radius:5px"></div>
<svg style="position:absolute;left:259.5px;top:66.8px;" width="19" height="19" viewBox="0 0 19 19"><rect x="0.8" y="0.8" width="17.4" height="13" rx="2.2" stroke="#dcdcdc" stroke-width="1.2" fill="none"/><path d="M9.5 14 V17.6 M5 17.8 H14" stroke="#dcdcdc" stroke-width="1.2"/></svg>
<svg style="position:absolute;left:301.2px;top:72.4px;" width="8" height="11" viewBox="0 0 8 11"><path d="M1.2 1 L6.2 5.5 L1.2 10" stroke="#e6e6e6" stroke-width="1.45" fill="none"/></svg>
<svg style="position:absolute;left:333px;top:74px;" width="15" height="4" viewBox="0 0 15 4"><circle cx="2" cy="2" r="1.6" fill="#e6e6e6"/><circle cx="7.5" cy="2" r="1.6" fill="#e6e6e6"/><circle cx="13" cy="2" r="1.6" fill="#e6e6e6"/></svg>
<div style="position:absolute;left:369.7px;top:69.30px;font-size:17.4px;line-height:17.4px;height:17.4px;color:#ffffff;font-weight:400;white-space:nowrap;letter-spacing:-0.62px">SampleProject</div>
<svg style="position:absolute;left:501.5px;top:72.4px;" width="8" height="11" viewBox="0 0 8 11"><path d="M1.2 1 L6.2 5.5 L1.2 10" stroke="#e6e6e6" stroke-width="1.45" fill="none"/></svg>
<div style="position:absolute;left:617.2px;top:57.2px;width:200px;height:38.4px;background:#383838;border-radius:5px"></div>
<div style="position:absolute;left:634.7px;top:69.35px;font-size:17.4px;line-height:17.4px;height:17.4px;color:#d2d2d2;font-weight:400;white-space:nowrap;letter-spacing:-0.63px">Search SampleProject</div>
<div style="position:absolute;left:0px;top:105.6px;width:800px;height:65.6px;background:#191919;"></div>
<div style="position:absolute;left:0px;top:171px;width:800px;height:1.2px;background:#303030;"></div>
<svg style="position:absolute;left:26.5px;top:128.5px;" width="20" height="20" viewBox="0 0 20 20"><circle cx="9.55" cy="9.55" r="8.6" stroke="#d8d8d8" stroke-width="1.15" fill="none"/><path d="M9.55 5.2 V13.7 M5.3 9.4 H13.8" stroke="#4cb6ee" stroke-width="1.25"/></svg>
<div style="position:absolute;left:55.5px;top:131.10px;font-size:15px;line-height:15px;height:15px;color:#ffffff;font-weight:400;white-space:nowrap;letter-spacing:-0.3px">New</div>
<svg style="position:absolute;left:92.3px;top:136.2px;" width="8" height="6" viewBox="0 0 8 6"><path d="M0.7 0.9 L3.9 4.1 L7.1 0.9" stroke="#c0c0c0" stroke-width="1.2" fill="none"/></svg>
<div style="position:absolute;left:120.2px;top:119.5px;width:1.2px;height:38px;background:#2e2e2e;"></div>
<svg style="position:absolute;left:144px;top:128.5px;opacity:0.45;" width="18" height="20" viewBox="0 0 18 20"><path d="M3.1 0.7 L11.4 13.4 M14.6 0.7 L6.3 13.4" stroke="#d4d4d4" stroke-width="1.15" fill="none"/><circle cx="4" cy="16" r="3.05" stroke="#4cb6ee" stroke-width="1.3" fill="none"/><circle cx="13.6" cy="16" r="3.05" stroke="#4cb6ee" stroke-width="1.3" fill="none"/></svg>
<svg style="position:absolute;left:201px;top:129px;opacity:0.45;" width="20" height="19" viewBox="0 0 20 19"><path d="M6.9 5 H4.2 Q1.7 5 1.7 7.5 V15.2 Q1.7 17.7 4.2 17.7 H9.6 Q12.1 17.7 12.1 15.2 V14.5" stroke="#d4d4d4" stroke-width="1.2" fill="none"/><rect x="7.5" y="1.7" width="10" height="11.9" rx="2.8" stroke="#4cb6ee" stroke-width="1.3" fill="none"/></svg>
<svg style="position:absolute;left:259px;top:128.6px;opacity:0.75;" width="19" height="20" viewBox="0 0 19 20"><path d="M4 2.8 H3.4 Q1.6 2.8 1.6 4.6 V17 Q1.6 18.6 3.2 18.6 H7" stroke="#6a6a6a" stroke-width="1.15" fill="none"/><path d="M12.6 2.8 H13 Q14.6 2.8 14.6 4.6 V5.8" stroke="#6a6a6a" stroke-width="1.15" fill="none"/><path d="M4.6 2.4 Q4.6 1.1 6.1 1.1 H10.8 Q12.3 1.1 12.3 2.4 Q12.3 3.7 10.8 3.7 H6.1 Q4.6 3.7 4.6 2.4 Z" stroke="#6a6a6a" stroke-width="1.1" fill="none"/><rect x="8.3" y="6.9" width="8.9" height="11.7" rx="2" stroke="#2c6a8e" stroke-width="1.2" fill="none"/></svg>
<svg style="position:absolute;left:315px;top:128.5px;opacity:0.45;" width="22" height="20" viewBox="0 0 22 20"><path d="M12.6 2.8 H4.8 Q1.8 2.8 1.8 5.8 V14.4 Q1.8 17.4 4.8 17.4 H12.6 M15.4 2.8 H17 Q20 2.8 20 5.8 V14.4 Q20 17.4 17 17.4 H15.4" stroke="#d4d4d4" stroke-width="1.25" fill="none"/><path d="M14 1 V19.2 M11.1 1 H16.9 M11.1 19.2 H16.9" stroke="#4cb6ee" stroke-width="1.3" fill="none"/><path d="M4.2 13.6 L7.9 5.6 L11.6 13.6 M5.5 11 H10.3" stroke="#4cb6ee" stroke-width="1.2" fill="none"/></svg>
<svg style="position:absolute;left:374.5px;top:129.5px;opacity:0.8;" width="19" height="18" viewBox="0 0 19 18"><path d="M7.2 2.1 H4.5 Q1.1 2.1 1.1 5.5 V13.4 Q1.1 16.8 4.5 16.8 H12.3 Q15.7 16.8 15.7 13.4 V12.6" stroke="#5a5a5a" stroke-width="1.2" fill="none"/><path d="M3.6 12.6 Q4.6 5.6 11.5 4.8 V1.2 L18 6.6 L11.5 12.2 V8.5 Q6.6 8.4 3.6 12.6 Z" stroke="#2e6a8e" stroke-width="1.2" fill="none" stroke-linejoin="round"/></svg>
<svg style="position:absolute;left:431.5px;top:128.5px;opacity:0.45;" width="19" height="20" viewBox="0 0 19 20"><path d="M0.8 3.4 H18.2" stroke="#d4d4d4" stroke-width="1.3"/><path d="M7.2 3.2 Q7.2 1.1 9.5 1.1 Q11.8 1.1 11.8 3.2" stroke="#d4d4d4" stroke-width="1.2" fill="none"/><path d="M1.9 3.8 L3.4 17 Q3.6 18.6 5.3 18.6 H13.7 Q15.4 18.6 15.6 17 L17.1 3.8" stroke="#d4d4d4" stroke-width="1.25" fill="none"/><path d="M7.7 7.6 V14.6 M11.4 7.6 V14.6" stroke="#d4d4d4" stroke-width="1.25"/></svg>
<div style="position:absolute;left:472.4px;top:119.5px;width:1.2px;height:38px;background:#2e2e2e;"></div>
<svg style="position:absolute;left:492.3px;top:130.5px;" width="21" height="16" viewBox="0 0 21 16"><path d="M6.2 15.4 V1.2 M1 6.4 L6.2 1.2 L11.4 6.4" stroke="#d8d8d8" stroke-width="1.3" fill="none"/><path d="M14.6 0.8 V14.8 M9.4 9.6 L14.6 14.8 L19.8 9.6" stroke="#4cb6ee" stroke-width="1.4" fill="none"/></svg>
<div style="position:absolute;left:521.0px;top:131.10px;font-size:15px;line-height:15px;height:15px;color:#ffffff;font-weight:400;white-space:nowrap;letter-spacing:-0.3px">Sort</div>
<svg style="position:absolute;left:556px;top:136.4px;" width="8" height="6" viewBox="0 0 8 6"><path d="M0.8 0.8 L3.8 3.8 L6.8 0.8" stroke="#c0c0c0" stroke-width="1.25" fill="none"/></svg>
<svg style="position:absolute;left:597.5px;top:136.5px;" width="20" height="5" viewBox="0 0 20 5"><circle cx="2.3" cy="2.3" r="2.1" fill="#fff"/><circle cx="10" cy="2.3" r="2.1" fill="#fff"/><circle cx="17.6" cy="2.3" r="2.1" fill="#fff"/></svg>
<svg style="position:absolute;left:663.6px;top:130.4px;" width="21" height="16" viewBox="0 0 21 16"><path d="M12 1.2 H4.2 Q1.2 1.2 1.2 4.2 V11.9 Q1.2 14.9 4.2 14.9 H12" stroke="#d0d0d0" stroke-width="1.25" fill="none"/><path d="M12 1.2 H16.6 Q19.6 1.2 19.6 4.2 V11.9 Q19.6 14.9 16.6 14.9 H12 Z" stroke="#4cb6ee" stroke-width="1.35" fill="none"/><path d="M14.3 6.1 H17.4 M14.3 11.2 H17.4" stroke="#4cb6ee" stroke-width="1.1"/><path d="M14.3 8.7 H17.4" stroke="#3a7fa8" stroke-width="1.1"/></svg>
<div style="position:absolute;left:692.4px;top:131.10px;font-size:15px;line-height:15px;height:15px;color:#ffffff;font-weight:400;white-space:nowrap;letter-spacing:-0.25px">Details</div>
<div style="position:absolute;left:190.3px;top:172.2px;width:2.4px;height:605px;background:#272727;"></div>
<div style="position:absolute;left:174.3px;top:193px;width:8.8px;height:358.6px;background:#9a9a9a;"></div>
<div style="position:absolute;left:14px;top:313.2px;width:145px;height:1.2px;background:#3a3a3a;"></div>
<div style="position:absolute;left:14px;top:736.2px;width:145px;height:1.2px;background:#3a3a3a;"></div>
<div style="position:absolute;left:0;top:0;width:168px;height:807px;overflow:hidden"><div style="position:absolute;left:65.2px;top:191.30px;font-size:15px;line-height:15px;height:15px;color:#f2f2f2;font-weight:400;white-space:nowrap;letter-spacing:-0.03px">Home</div></div>
<svg style="position:absolute;left:42px;top:189.2px;" width="20" height="20" viewBox="0 0 20 20"><defs><linearGradient id="hg" x1="0" y1="0" x2="0" y2="1"><stop offset="0" stop-color="#e8e8e8"/><stop offset="1" stop-color="#a9a9a9"/></linearGradient><linearGradient id="rg" x1="0" y1="0" x2="0" y2="1"><stop offset="0" stop-color="#f48a2a"/><stop offset="1" stop-color="#d85a10"/></linearGradient></defs><path d="M2.6 10.2 L10 3.4 L17.4 10.2 V17.6 Q17.4 18.6 16.4 18.6 H12.6 V13.4 Q12.6 12.6 11.8 12.6 H8.2 Q7.4 12.6 7.4 13.4 V18.6 H3.6 Q2.6 18.6 2.6 17.6 Z" fill="url(#hg)"/><path d="M1.4 10.4 L10 2.2 L18.6 10.4" stroke="url(#rg)" stroke-width="2.8" fill="none" stroke-linejoin="round"/></svg>
<div style="position:absolute;left:0;top:0;width:168px;height:807px;overflow:hidden"><div style="position:absolute;left:65.2px;top:229.80px;font-size:15px;line-height:15px;height:15px;color:#f2f2f2;font-weight:400;white-space:nowrap;letter-spacing:-0.78px">Gallery</div></div>
<svg style="position:absolute;left:42px;top:227.0px;" width="21" height="21" viewBox="0 0 21 21"><defs><linearGradient id="galg" x1="0" y1="0" x2="1" y2="1"><stop offset="0" stop-color="#36aef2"/><stop offset="1" stop-color="#0e6cc8"/></linearGradient><linearGradient id="mtg" x1="0" y1="0" x2="0" y2="1"><stop offset="0" stop-color="#ffffff"/><stop offset="1" stop-color="#c8e2f6"/></linearGradient></defs><rect x="3" y="3.2" width="16.3" height="16.3" rx="2" fill="#2a78d0"/><rect x="0.5" y="0.3" width="16" height="16.4" rx="2" fill="url(#galg)" stroke="#191919" stroke-width="1"/><path d="M1.5 16.2 L8.5 9 L15.5 16.2 Z" fill="url(#mtg)"/><circle cx="12" cy="5" r="1.4" fill="#fff"/></svg>
<div style="position:absolute;left:0;top:0;width:168px;height:807px;overflow:hidden"><div style="position:absolute;left:65.2px;top:268.30px;font-size:15px;line-height:15px;height:15px;color:#f2f2f2;font-weight:400;white-space:nowrap;letter-spacing:-0.5px">OneDrive - Personal</div></div>
<svg style="position:absolute;left:42px;top:269.6px;" width="20" height="13" viewBox="0 0 20 13"><path d="M3 8.6 Q3 3.8 7.2 3.4 Q9 0.2 12.6 0.3 Q16.6 0.6 17.4 5 Q19.9 5.6 19.9 8.6 V9.4 H3 Z" fill="#0b66c2"/><path d="M0.2 9.4 Q0.2 6.8 2.8 6.4 Q5 3.6 8.8 4.8 Q12.2 4.8 14.4 8 Q17.4 6.4 19.8 9 Q20 12.6 16.6 12.6 H3.2 Q0.2 12.6 0.2 9.4 Z" fill="#2aa3ee"/></svg>
<svg style="position:absolute;left:18.5px;top:270.4px;" width="8" height="12" viewBox="0 0 8 12"><path d="M1.4 1 L6.2 5.6 L1.4 10.2" stroke="#7c7c7c" stroke-width="1.9" fill="none"/></svg>
<div style="position:absolute;left:0;top:0;width:168px;height:807px;overflow:hidden"><div style="position:absolute;left:65.2px;top:344.80px;font-size:15px;line-height:15px;height:15px;color:#f2f2f2;font-weight:400;white-space:nowrap;letter-spacing:-0.17px">Desktop</div></div>
<svg style="position:absolute;left:42px;top:345.0px;" width="20" height="15" viewBox="0 0 20 15"><defs><linearGradient id="dg" x1="0" y1="0" x2="1" y2="1"><stop offset="0" stop-color="#3ccbe8"/><stop offset="1" stop-color="#1578cc"/></linearGradient></defs><rect x="0.3" y="0.3" width="19.4" height="14" rx="1.4" fill="url(#dg)"/><rect x="2" y="2" width="1.6" height="1.2" fill="#e8f6fb"/><rect x="2" y="4.6" width="1.6" height="1.2" fill="#e8f6fb"/></svg>
<svg style="position:absolute;left:151px;top:345.3px;" width="15" height="15" viewBox="0 0 15 15"><g transform="translate(7.3 6.9) rotate(45) translate(0 -8.4)" fill="#a5afb7"><rect x="-2.9" y="0" width="5.8" height="5.6" rx="1.5"/><rect x="-2" y="5" width="4" height="3"/><path d="M-5.2 10 L5.2 10 L3.2 7.4 L-3.2 7.4 Z"/><path d="M0 9.6 V15.8" stroke="#a5afb7" stroke-width="1.5" stroke-linecap="round"/></g></svg>
<div style="position:absolute;left:0;top:0;width:168px;height:807px;overflow:hidden"><div style="position:absolute;left:65.2px;top:383.30px;font-size:15px;line-height:15px;height:15px;color:#f2f2f2;font-weight:400;white-space:nowrap;letter-spacing:-0.22px">Downloads</div></div>
<svg style="position:absolute;left:45px;top:382px;" width="14" height="19" viewBox="0 0 14 19"><path d="M7 0.6 V14.2 M1.2 8.6 L7 14.2 L12.8 8.6" stroke="#2cbe9a" stroke-width="1.3" fill="none"/><path d="M0.4 17.6 H13.6" stroke="#2cbe9a" stroke-width="1.5"/></svg>
<svg style="position:absolute;left:151px;top:383.8px;" width="15" height="15" viewBox="0 0 15 15"><g transform="translate(7.3 6.9) rotate(45) translate(0 -8.4)" fill="#a5afb7"><rect x="-2.9" y="0" width="5.8" height="5.6" rx="1.5"/><rect x="-2" y="5" width="4" height="3"/><path d="M-5.2 10 L5.2 10 L3.2 7.4 L-3.2 7.4 Z"/><path d="M0 9.6 V15.8" stroke="#a5afb7" stroke-width="1.5" stroke-linecap="round"/></g></svg>
<div style="position:absolute;left:0;top:0;width:168px;height:807px;overflow:hidden"><div style="position:absolute;left:65.2px;top:421.80px;font-size:15px;line-height:15px;height:15px;color:#f2f2f2;font-weight:400;white-space:nowrap;letter-spacing:-0.24px">Documents</div></div>
<svg style="position:absolute;left:44.8px;top:419.5px;" width="15" height="20" viewBox="0 0 15 20"><defs><linearGradient id="docg" x1="0" y1="0" x2="1" y2="1"><stop offset="0" stop-color="#aabdd0"/><stop offset="1" stop-color="#6a85a4"/></linearGradient></defs><rect x="0.3" y="0.3" width="14" height="19.4" rx="1.2" fill="url(#docg)"/><path d="M2.4 6 H6.8 M2.4 8.2 H6.8 M2.4 11.2 H12 M2.4 13.4 H12" stroke="#e6edf4" stroke-width="0.9"/><rect x="9" y="5.4" width="3" height="3" fill="#f4f7fa"/></svg>
<svg style="position:absolute;left:151px;top:422.3px;" width="15" height="15" viewBox="0 0 15 15"><g transform="translate(7.3 6.9) rotate(45) translate(0 -8.4)" fill="#a5afb7"><rect x="-2.9" y="0" width="5.8" height="5.6" rx="1.5"/><rect x="-2" y="5" width="4" height="3"/><path d="M-5.2 10 L5.2 10 L3.2 7.4 L-3.2 7.4 Z"/><path d="M0 9.6 V15.8" stroke="#a5afb7" stroke-width="1.5" stroke-linecap="round"/></g></svg>
<div style="position:absolute;left:0;top:0;width:168px;height:807px;overflow:hidden"><div style="position:absolute;left:65.2px;top:460.30px;font-size:15px;line-height:15px;height:15px;color:#f2f2f2;font-weight:400;white-space:nowrap;letter-spacing:-0.73px">Pictures</div></div>
<svg style="position:absolute;left:43px;top:458.5px;" width="18" height="18" viewBox="0 0 18 18"><rect x="0.4" y="0.4" width="17.2" height="17.2" rx="2" fill="#1c86e0"/><path d="M2 16.2 L9 9 L16 16.2 Z" fill="#eaf4fc"/><circle cx="13.2" cy="4.4" r="1.6" fill="#fff"/></svg>
<svg style="position:absolute;left:151px;top:460.8px;" width="15" height="15" viewBox="0 0 15 15"><g transform="translate(7.3 6.9) rotate(45) translate(0 -8.4)" fill="#a5afb7"><rect x="-2.9" y="0" width="5.8" height="5.6" rx="1.5"/><rect x="-2" y="5" width="4" height="3"/><path d="M-5.2 10 L5.2 10 L3.2 7.4 L-3.2 7.4 Z"/><path d="M0 9.6 V15.8" stroke="#a5afb7" stroke-width="1.5" stroke-linecap="round"/></g></svg>
<div style="position:absolute;left:0;top:0;width:168px;height:807px;overflow:hidden"><div style="position:absolute;left:65.2px;top:498.80px;font-size:15px;line-height:15px;height:15px;color:#f2f2f2;font-weight:400;white-space:nowrap;letter-spacing:-0.38px">Music</div></div>
<svg style="position:absolute;left:42.6px;top:496.8px;" width="19.4" height="19.4" viewBox="0 0 19.4 19.4"><defs><linearGradient id="mg" x1="0" y1="0" x2="1" y2="1"><stop offset="0" stop-color="#f39a48"/><stop offset="0.6" stop-color="#e06a7c"/><stop offset="1" stop-color="#b458c0"/></linearGradient></defs><circle cx="9.7" cy="9.7" r="9.5" fill="url(#mg)"/><path d="M9.4 3.4 V13.2" stroke="#fff" stroke-width="1.4"/><path d="M9.4 3.4 Q12.2 4.4 13.4 6.6 L9.6 6.4 Z" fill="#fff"/><circle cx="7.2" cy="13.4" r="2.3" fill="#fff"/></svg>
<svg style="position:absolute;left:151px;top:499.3px;" width="15" height="15" viewBox="0 0 15 15"><g transform="translate(7.3 6.9) rotate(45) translate(0 -8.4)" fill="#a5afb7"><rect x="-2.9" y="0" width="5.8" height="5.6" rx="1.5"/><rect x="-2" y="5" width="4" height="3"/><path d="M-5.2 10 L5.2 10 L3.2 7.4 L-3.2 7.4 Z"/><path d="M0 9.6 V15.8" stroke="#a5afb7" stroke-width="1.5" stroke-linecap="round"/></g></svg>
<div style="position:absolute;left:0;top:0;width:168px;height:807px;overflow:hidden"><div style="position:absolute;left:65.2px;top:537.30px;font-size:15px;line-height:15px;height:15px;color:#f2f2f2;font-weight:400;white-space:nowrap;letter-spacing:-0.56px">Videos</div></div>
<svg style="position:absolute;left:43.8px;top:534.6px;" width="17" height="20" viewBox="0 0 17 20"><defs><linearGradient id="vg" x1="0" y1="0" x2="0" y2="1"><stop offset="0" stop-color="#b86af0"/><stop offset="1" stop-color="#8838d6"/></linearGradient></defs><rect x="0.2" y="0.2" width="16" height="19" rx="1.3" fill="url(#vg)"/><g fill="#5a2698"><circle cx="2.3" cy="3.2" r="0.95"/><circle cx="2.3" cy="7.4" r="0.95"/><circle cx="2.3" cy="11.6" r="0.95"/><circle cx="2.3" cy="15.8" r="0.95"/><circle cx="14.1" cy="3.2" r="0.95"/><circle cx="14.1" cy="7.4" r="0.95"/><circle cx="14.1" cy="11.6" r="0.95"/><circle cx="14.1" cy="15.8" r="0.95"/></g><path d="M5.8 5.4 L11.8 9.6 L5.8 13.8 Z" fill="#eeeeee"/></svg>
<svg style="position:absolute;left:151px;top:537.8px;" width="15" height="15" viewBox="0 0 15 15"><g transform="translate(7.3 6.9) rotate(45) translate(0 -8.4)" fill="#a5afb7"><rect x="-2.9" y="0" width="5.8" height="5.6" rx="1.5"/><rect x="-2" y="5" width="4" height="3"/><path d="M-5.2 10 L5.2 10 L3.2 7.4 L-3.2 7.4 Z"/><path d="M0 9.6 V15.8" stroke="#a5afb7" stroke-width="1.5" stroke-linecap="round"/></g></svg>
<div style="position:absolute;left:0;top:0;width:168px;height:807px;overflow:hidden"><div style="position:absolute;left:65.2px;top:575.80px;font-size:15px;line-height:15px;height:15px;color:#f2f2f2;font-weight:400;white-space:nowrap;letter-spacing:-0.7px">S04</div></div>
<svg style="position:absolute;left:43px;top:575.5px;" width="18" height="14" viewBox="0 0 18 14"><path d="M0.3 1 Q0.3 0.1 1.2 0.1 L5.8 0.1 Q6.4 0.1 6.8 0.6 L7.6 1.5 L17.2 1.5 Q17.7 1.5 17.7 2 V6 H0.3 Z" fill="#eeb00e"/><path d="M0.3 2.9 H6.6 L7.9 1.7 H17.2 Q17.7 1.7 17.7 2.2 V13.3 Q17.7 13.9 17.1 13.9 H0.9 Q0.3 13.9 0.3 13.3 Z" fill="url(#fg)"/></svg>
<div style="position:absolute;left:0;top:0;width:168px;height:807px;overflow:hidden"><div style="position:absolute;left:65.2px;top:614.30px;font-size:15px;line-height:15px;height:15px;color:#f2f2f2;font-weight:400;white-space:nowrap;letter-spacing:-0.69px">Screenshots</div></div>
<svg style="position:absolute;left:43px;top:614px;" width="18" height="14" viewBox="0 0 18 14"><path d="M0.3 1 Q0.3 0.1 1.2 0.1 L5.8 0.1 Q6.4 0.1 6.8 0.6 L7.6 1.5 L17.2 1.5 Q17.7 1.5 17.7 2 V6 H0.3 Z" fill="#eeb00e"/><path d="M0.3 2.9 H6.6 L7.9 1.7 H17.2 Q17.7 1.7 17.7 2.2 V13.3 Q17.7 13.9 17.1 13.9 H0.9 Q0.3 13.9 0.3 13.3 Z" fill="url(#fg)"/></svg>
<div style="position:absolute;left:0;top:0;width:168px;height:807px;overflow:hidden"><div style="position:absolute;left:65.2px;top:652.80px;font-size:15px;line-height:15px;height:15px;color:#f2f2f2;font-weight:400;white-space:nowrap;letter-spacing:-0.58px">Torrent</div></div>
<svg style="position:absolute;left:43px;top:652.5px;" width="18" height="14" viewBox="0 0 18 14"><path d="M0.3 1 Q0.3 0.1 1.2 0.1 L5.8 0.1 Q6.4 0.1 6.8 0.6 L7.6 1.5 L17.2 1.5 Q17.7 1.5 17.7 2 V6 H0.3 Z" fill="#eeb00e"/><path d="M0.3 2.9 H6.6 L7.9 1.7 H17.2 Q17.7 1.7 17.7 2.2 V13.3 Q17.7 13.9 17.1 13.9 H0.9 Q0.3 13.9 0.3 13.3 Z" fill="url(#fg)"/></svg>
<div style="position:absolute;left:0;top:0;width:168px;height:807px;overflow:hidden"><div style="position:absolute;left:65.2px;top:691.30px;font-size:15px;line-height:15px;height:15px;color:#f2f2f2;font-weight:400;white-space:nowrap;letter-spacing:-0.05px">Unity</div></div>
<svg style="position:absolute;left:43px;top:691px;" width="18" height="14" viewBox="0 0 18 14"><path d="M0.3 1 Q0.3 0.1 1.2 0.1 L5.8 0.1 Q6.4 0.1 6.8 0.6 L7.6 1.5 L17.2 1.5 Q17.7 1.5 17.7 2 V6 H0.3 Z" fill="#eeb00e"/><path d="M0.3 2.9 H6.6 L7.9 1.7 H17.2 Q17.7 1.7 17.7 2.2 V13.3 Q17.7 13.9 17.1 13.9 H0.9 Q0.3 13.9 0.3 13.3 Z" fill="url(#fg)"/></svg>
<div style="position:absolute;left:0;top:0;width:168px;height:807px;overflow:hidden"><div style="position:absolute;left:65.2px;top:767.80px;font-size:15px;line-height:15px;height:15px;color:#f2f2f2;font-weight:400;white-space:nowrap;letter-spacing:-0.5px">Creative Cloud Files</div></div>
<svg style="position:absolute;left:45.5px;top:767.0px;" width="20" height="17" viewBox="0 0 20 17"><rect x="0.2" y="0" width="10.5" height="15" fill="#f3d46a"/><rect x="0.2" y="0" width="3.6" height="15" fill="#fbe6a8"/><path d="M5.8 10.6 Q8.6 7.2 12 8.6 Q14.6 9.6 15.4 11.4" stroke="#d21c1c" stroke-width="1.7" fill="none"/><path d="M8 11.4 Q10.4 9.6 12.6 11.2" stroke="#d21c1c" stroke-width="1.3" fill="none"/></svg>
<svg style="position:absolute;left:18.5px;top:769.9px;" width="8" height="12" viewBox="0 0 8 12"><path d="M1.4 1 L6.2 5.6 L1.4 10.2" stroke="#7c7c7c" stroke-width="1.9" fill="none"/></svg>
<div style="position:absolute;left:229.2px;top:181.90px;font-size:15px;line-height:15px;height:15px;color:#dadada;font-weight:400;white-space:nowrap;letter-spacing:-0.09px">Name</div>
<svg style="position:absolute;left:386.8px;top:173.2px;" width="10" height="6" viewBox="0 0 10 6"><path d="M0.8 5.2 L5 1 L9.2 5.2" stroke="#a0a0a0" stroke-width="1" fill="none"/></svg>
<div style="position:absolute;left:560px;top:172.2px;width:1.2px;height:32.5px;background:#3a3a3a;"></div>
<div style="position:absolute;left:568.1px;top:181.90px;font-size:15px;line-height:15px;height:15px;color:#dadada;font-weight:400;white-space:nowrap;letter-spacing:-0.09px">Date modified</div>
<div style="position:absolute;left:755.1px;top:172.2px;width:1.2px;height:32.5px;background:#3a3a3a;"></div>
<div style="position:absolute;left:762.4px;top:181.90px;font-size:15px;line-height:15px;height:15px;color:#dadada;font-weight:400;white-space:nowrap;letter-spacing:-0.09px">Type</div>
<div style="position:absolute;left:416.29999999999995px;top:226.80px;font-size:15px;line-height:15px;height:15px;color:#e0e0e0;font-weight:400;white-space:nowrap;letter-spacing:-0.22px">This folder is empty.</div>
<div style="position:absolute;left:214.5px;top:763px;width:361px;height:8.8px;background:#9a9a9a;"></div>
<div style="position:absolute;left:575.5px;top:756.4px;width:170.5px;height:1.2px;background:#101010;"></div>
<div style="position:absolute;left:0px;top:776.8px;width:800px;height:40px;background:#1e1e1e;"></div>
<div style="position:absolute;left:18.5px;top:784.80px;font-size:15px;line-height:15px;height:15px;color:#e0e0e0;font-weight:400;white-space:nowrap;letter-spacing:-0.37px">0 items</div>
<div style="position:absolute;left:79.5px;top:784.8px;width:2.2px;height:13.2px;background:#f0f0f0;"></div>
<div style="position:absolute;left:707.4px;top:777px;width:26.5px;height:28px;background:#6b6b6b;"></div>
<svg style="position:absolute;left:712px;top:782.8px;" width="20" height="19" viewBox="0 0 20 19"><rect x="0.5" y="0.5" width="19" height="18" rx="3" fill="#d4d4d4"/><path d="M3 4 H17 M3 8 H17 M3 12 H17 M3 16 H17" stroke="#1a1a1a" stroke-width="1.1"/></svg>
<svg style="position:absolute;left:738px;top:781px;" width="20" height="20" viewBox="0 0 20 20"><rect x="1" y="1" width="18" height="18" rx="3" stroke="#c4c4c4" stroke-width="2" fill="none"/><rect x="3.2" y="3.2" width="13.6" height="10.4" fill="#ffffff" stroke="#222" stroke-width="0.8"/><path d="M3.2 16 H16.8" stroke="#555" stroke-width="1"/></svg>
</div></div>
<div style="position:absolute;left:767px;top:0;width:3px;height:807px;background:linear-gradient(to right,#8a8a8a,#767676 50%,#5e5e5e)"></div>
<div style="position:absolute;left:770px;top:2px;width:1.5px;height:803px;background:#0e0e0e"></div>
<div style="position:absolute;left:1535px;top:0;width:1px;height:807px;background:#6c6c6c"></div>
</body></html>
